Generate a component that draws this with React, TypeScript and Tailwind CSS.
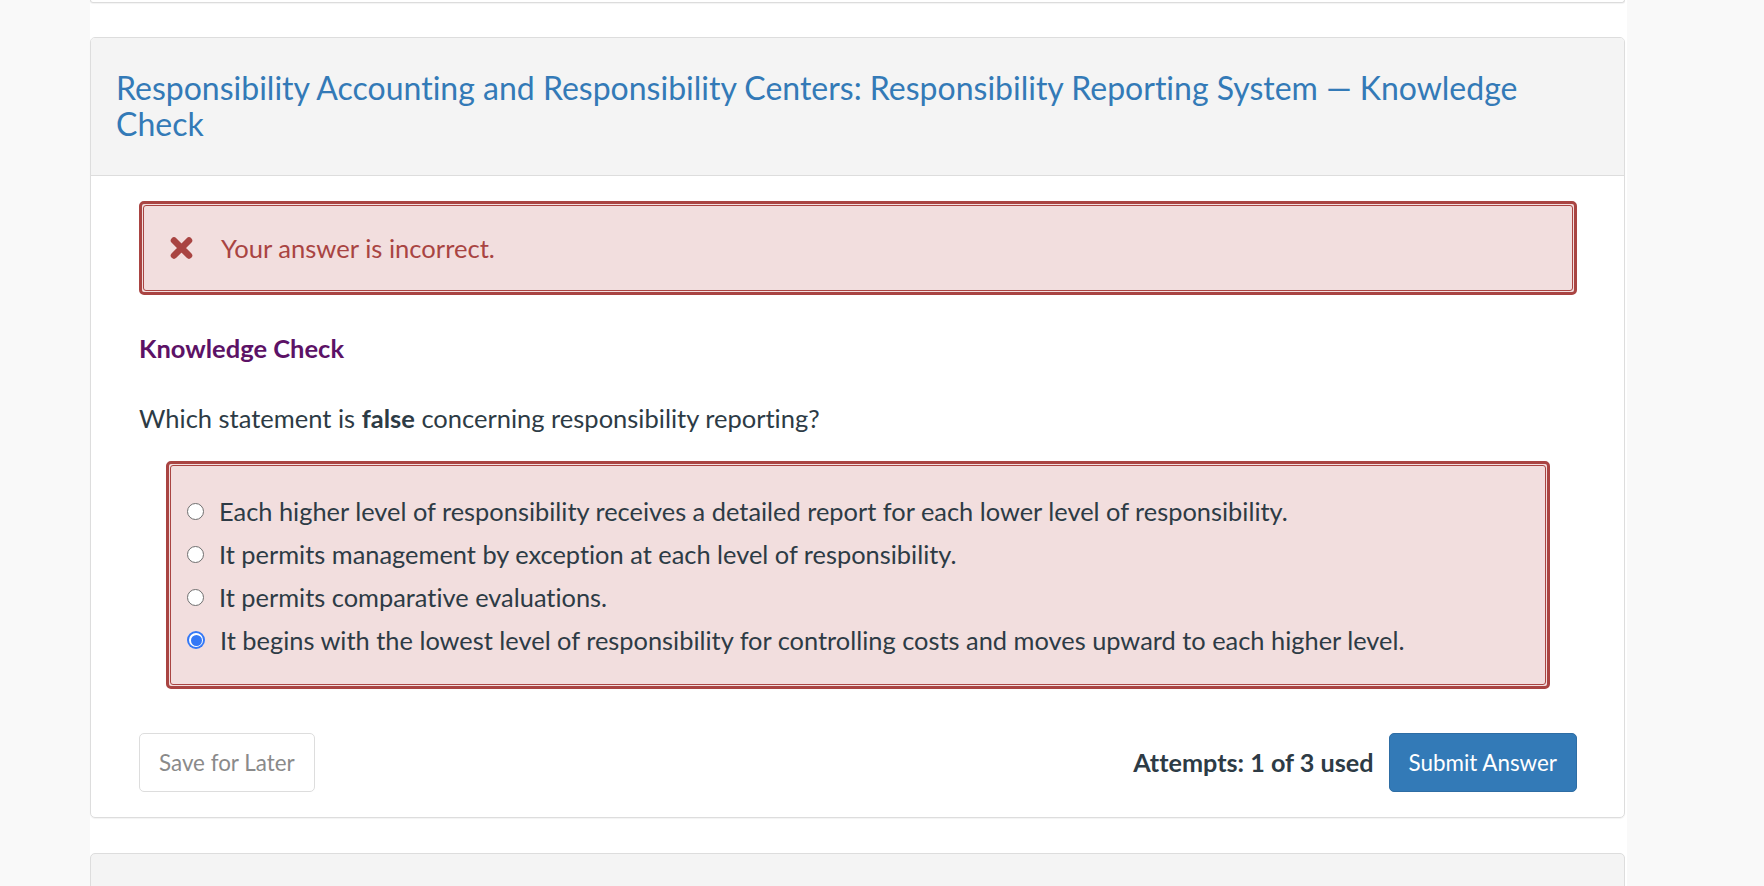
import React from "react";

const options = [
  "Each higher level of responsibility receives a detailed report for each lower level of responsibility.",
  "It permits management by exception at each level of responsibility.",
  "It permits comparative evaluations.",
  "It begins with the lowest level of responsibility for controlling costs and moves upward to each higher level.",
];

function Radio({ checked }: { checked: boolean }) {
  if (checked) {
    return (
      <span className="flex h-[18px] w-[18px] shrink-0 items-center justify-center rounded-full bg-[#3478f6] p-[2px]">
        <span className="flex h-full w-full items-center justify-center rounded-full bg-white p-[1.5px]">
          <span className="h-full w-full rounded-full bg-[#3478f6]" />
        </span>
      </span>
    );
  }
  return <span className="h-[17px] w-[17px] shrink-0 rounded-full border border-[#6f6f6f] bg-white" />;
}

export default function App() {
  return (
    <div className="min-h-screen bg-[#f9f9f9] font-[Lato,'Liberation_Sans',sans-serif] text-[#2d3b45] [font-variant-ligatures:none]">
      <div className="ml-[90px] min-h-screen w-[1537px] bg-white">
        <div className="h-[3px] w-[1535px] rounded-b-[4px] border-x border-b border-[#dcdcdc] shadow-[0_1px_1px_rgba(0,0,0,0.05)]" />

        <div className="mt-[34px] w-[1535px] rounded-[5px] border border-[#dddddd] shadow-[0_1px_1px_rgba(0,0,0,0.05)]">
          <div className="rounded-t-[4px] border-b border-[#dddddd] bg-[#f4f4f4] pl-[25px] pr-[80px] pt-[32px] pb-[33px]">
            <h3 className="text-[32px] font-normal leading-[36px] text-[#337ab7]">
              Responsibility Accounting and Responsibility Centers: Responsibility Reporting System — Knowledge Check
            </h3>
          </div>

          <div className="pl-[48px] pr-[47px] pt-[25px] pb-[25px]">
            <div className="rounded-[5px] border-[3px] border-[#a94442] bg-[#f2dede] p-[1px]">
              <div className="flex h-[86px] items-center rounded-[3px] border border-[#a94442] pl-[26px]">
                <svg width="23" height="22" viewBox="0 0 23 22" className="shrink-0">
                  <path d="M4 3.5 L19 18.5 M19 3.5 L4 18.5" stroke="#a94442" strokeWidth="6.5" strokeLinecap="round" fill="none" />
                </svg>
                <span className="ml-[28px] text-[25.6px] leading-[36px] text-[#a94442]">Your answer is incorrect.</span>
              </div>
            </div>

            <h4 className="mt-[35px] text-[25.5px] font-bold leading-[36px] text-[#5c1266]">Knowledge Check</h4>

            <p className="mt-[33.5px] text-[25.5px] leading-[36px]">
              Which statement is <strong className="font-bold">false</strong> concerning responsibility reporting?
            </p>

            <div className="ml-[27px] mr-[27px] mt-[25.5px] rounded-[5px] border-[3px] border-[#a94442] bg-[#f2dede] p-[1px]">
              <div className="rounded-[3px] border border-[#a94442] pl-[16px] pt-[23.5px] pb-[22.5px]">
                {options.map((o, i) => (
                  <label key={i} className="flex h-[43px] items-center gap-[15px] text-[25.4px]">
                    <Radio checked={i === 3} />
                    <span>{o}</span>
                  </label>
                ))}
              </div>
            </div>

            <div className="mt-[44px] flex items-center justify-between">
              <button className="h-[59px] rounded-[5px] border border-[#dddddd] bg-white px-[19px] text-[22.4px] text-[#8a8a8a]">
                Save for Later
              </button>
              <div className="flex items-center">
                <span className="text-[25.2px] font-bold">Attempts: 1 of 3 used</span>
                <button className="ml-[15px] h-[59px] rounded-[5px] border border-[#2e6da4] bg-[#337ab7] px-[19px] text-[22.4px] text-white">
                  Submit Answer
                </button>
              </div>
            </div>
          </div>
        </div>

        <div className="mt-[35px] h-[60px] w-[1535px] rounded-t-[5px] border border-[#dddddd] bg-[#f4f4f4]" />
      </div>
    </div>
  );
}
